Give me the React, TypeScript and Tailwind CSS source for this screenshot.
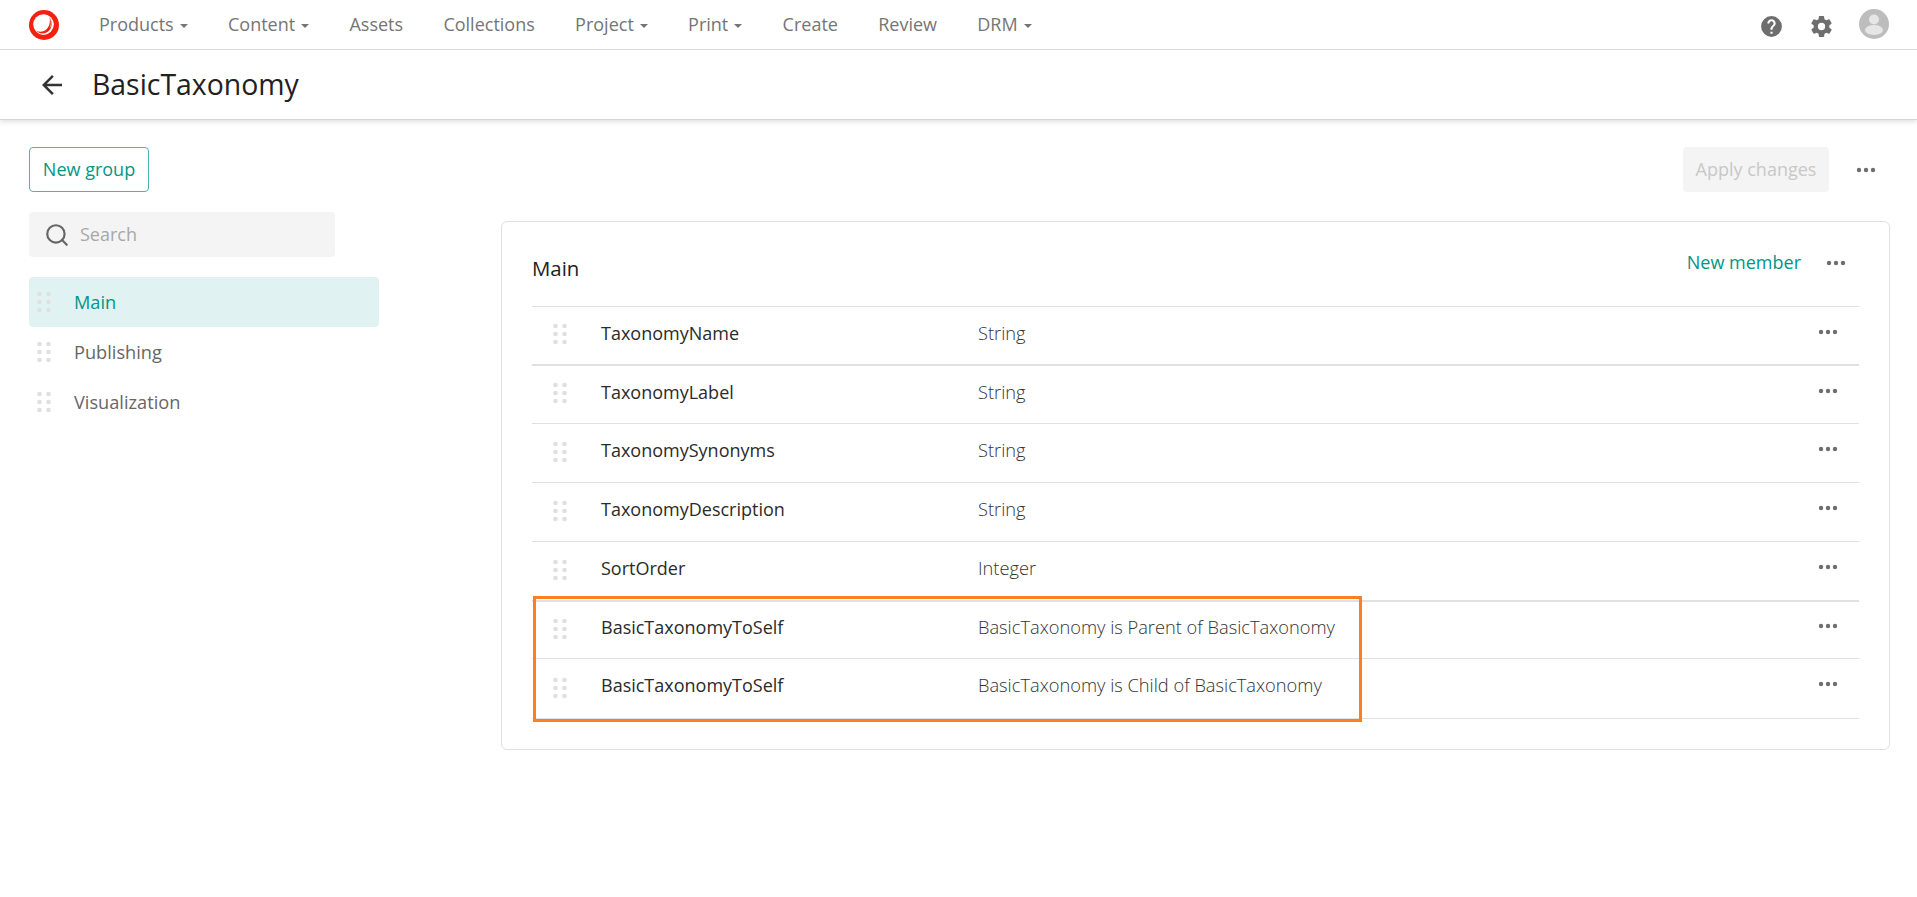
import React from "react";
import { Search } from "lucide-react";

function Caret() {
  return <span className="ml-[6px] inline-block w-0 h-0 border-x-[4.5px] border-x-transparent border-t-[4.5px] border-t-[#757575] translate-y-[1px]" />;
}

function Dots({ className = "" }: { className?: string }) {
  return (
    <svg width="20" height="6" viewBox="0 0 20 6" className={className}>
      <circle cx="3" cy="3" r="2.2" fill="#6e6e6e" />
      <circle cx="10" cy="3" r="2.2" fill="#6e6e6e" />
      <circle cx="17" cy="3" r="2.2" fill="#6e6e6e" />
    </svg>
  );
}

function Handle() {
  return (
    <svg width="14" height="22" viewBox="0 0 14 22" className="shrink-0">
      {[3, 11, 19].map((y) => (
        <g key={y}>
          <circle cx="2.5" cy={y} r="2.3" fill="#e0e0e0" />
          <circle cx="11.5" cy={y} r="2.3" fill="#e0e0e0" />
        </g>
      ))}
    </svg>
  );
}

function Logo() {
  return (
    <svg width="30" height="30" viewBox="0 0 30 30">
      <circle cx="15" cy="15" r="15" fill="#f5200f" />
      <circle cx="14.500" cy="14.500" r="10.300" fill="#fff" />
      <path d="M20.500 7C24 12 23.500 18.500 18.500 22C14.500 24.800 10 24 6.800 20.500C11 22.800 15 21.800 17.800 19C20.500 16.200 21.500 11.500 20.500 7Z" fill="#f5200f" />
      <path d="M9.500 23c4 1.800 8.500.800 11.500-2.500M12.500 24.300c3.500.500 7-.800 9.500-3.800M21.500 9c1 3 .8 6-.5 8.500" stroke="#fff" strokeWidth="0.5" fill="none" />
    </svg>
  );
}

const nav: [string, boolean][] = [
  ["Products", true],
  ["Content", true],
  ["Assets", false],
  ["Collections", false],
  ["Project", true],
  ["Print", true],
  ["Create", false],
  ["Review", false],
  ["DRM", true],
];

const groups = ["Main", "Publishing", "Visualization"];

const rows: { name: string; type: string; h: string; last?: boolean }[] = [
  { name: "TaxonomyName", type: "String", h: "h-[59px] border-b-2 pb-[5px]" },
  { name: "TaxonomyLabel", type: "String", h: "h-[58px] border-b pb-[5px]" },
  { name: "TaxonomySynonyms", type: "String", h: "h-[59px] border-b pb-[5px]" },
  { name: "TaxonomyDescription", type: "String", h: "h-[59px] border-b pb-[5px]" },
  { name: "SortOrder", type: "Integer", h: "h-[60px] border-b-2 pb-[5px]" },
  { name: "BasicTaxonomyToSelf", type: "BasicTaxonomy is Parent of BasicTaxonomy", h: "h-[57px] border-b pb-[5px]" },
  { name: "BasicTaxonomyToSelf", type: "BasicTaxonomy is Child of BasicTaxonomy", h: "h-[60px] border-b pb-[6px]", last: true },
];

export default function App() {
  return (
    <div className="min-h-[897px] bg-white font-['Open_Sans',sans-serif] text-[#333]">
      <header className="h-[50px] border-b border-[#e0e0e0] flex items-center pl-[29px] pr-[28px]">
        <Logo />
        <nav className="flex items-center gap-[40.300px] ml-[40px] text-[18px] text-[#757575]">
          {nav.map(([label, caret]) => (
            <span key={label} className="flex items-center">
              {label}
              {caret && <Caret />}
            </span>
          ))}
        </nav>
        <div className="ml-auto flex items-center">
          <svg width="25" height="25" viewBox="0 0 24 24" fill="#6e6e6e" className="translate-y-[2px]">
            <path d="M12 2a10 10 0 1 0 0 20 10 10 0 0 0 0-20Zm1 17h-2v-2h2v2Zm2.070-7.750-.9.920C13.450 12.900 13 13.500 13 15h-2v-.5c0-1.100.45-2.100 1.170-2.830l1.240-1.260c.37-.360.590-.860.590-1.410a2 2 0 0 0-4 0H8a4 4 0 0 1 8 0c0 .880-.360 1.680-.930 2.250Z" />
          </svg>
          <svg width="25" height="25" viewBox="0 0 24 24" fill="#6e6e6e" className="ml-[25px] translate-y-[2px]">
            <path d="M19.430 12.980c.04-.320.07-.640.07-.980s-.03-.660-.07-.980l2.110-1.650c.19-.150.240-.420.120-.640l-2-3.460c-.12-.220-.390-.300-.610-.220l-2.490 1c-.520-.400-1.080-.730-1.690-.980l-.380-2.650A.49.49 0 0 0 14 2h-4c-.250 0-.460.180-.490.420l-.380 2.650c-.610.250-1.170.590-1.690.980l-2.490-1c-.230-.090-.490 0-.610.220l-2 3.460c-.130.220-.070.490.120.640l2.110 1.650c-.040.320-.070.650-.070.980s.03.660.07.980l-2.110 1.650c-.190.150-.240.420-.120.640l2 3.460c.12.220.390.300.610.220l2.490-1c.520.400 1.080.730 1.690.980l.380 2.650c.03.240.240.420.490.420h4c.250 0 .460-.180.490-.420l.380-2.650c.610-.250 1.170-.590 1.690-.980l2.490 1c.230.090.490 0 .610-.220l2-3.460c.12-.220.070-.490-.120-.640l-2.110-1.650ZM12 15.500a3.500 3.500 0 1 1 0-7 3.500 3.500 0 0 1 0 7Z" />
          </svg>
          <svg width="30" height="30" viewBox="0 0 30 30" className="ml-[25px] -translate-y-[1px]">
            <circle cx="15" cy="15" r="15" fill="#bdbdbd" />
            <circle cx="15" cy="10.500" r="5" fill="#e6e6e6" />
            <ellipse cx="15" cy="21" rx="9" ry="5" fill="#e6e6e6" />
          </svg>
        </div>
      </header>

      <div className="h-[70px] border-b border-[#d6d6d6] shadow-[0_2px_5px_rgba(0,0,0,0.12)] flex items-center pl-[37px]">
        <svg width="30" height="30" viewBox="0 0 24 24" fill="#333">
          <path d="M20 11H7.830l5.590-5.590L12 4l-8 8 8 8 1.410-1.410L7.830 13H20v-2Z" />
        </svg>
        <h1 className="ml-[25px] text-[28.400px] font-normal text-[#212121]">BasicTaxonomy</h1>
      </div>

      <main className="flex pl-[29px] pr-[27px] pt-[27px]">
        <aside className="w-[350px] shrink-0">
          <button className="h-[45px] w-[120px] rounded-[4px] border border-[#4db6ac] bg-white text-[18px] font-medium text-[#009688]">New group</button>
          <div className="mt-[20px] h-[45px] w-[306px] rounded-[4px] bg-[#f4f4f4] flex items-center pl-[15px] text-[18px] text-[#a8a8a8]">
            <Search size={26} color="#666" strokeWidth={2} />
            <span className="ml-[10px]">Search</span>
          </div>
          <ul className="mt-[20px]">
            {groups.map((g, i) => (
              <li key={g} className={`h-[50px] rounded-[4px] flex items-center pl-[8px] text-[18.200px] ${i === 0 ? "bg-[#e0f2f1] text-[#009688] font-medium" : "text-[#666]"}`}>
                <Handle />
                <span className="ml-[22px] translate-x-[1px] translate-y-[1px]">{g}</span>
              </li>
            ))}
          </ul>
        </aside>

        <section className="ml-[122px] flex-1 min-w-0">
          <div className="h-[45px] flex items-center justify-end">
            <button className="h-[45px] w-[146px] rounded-[4px] bg-[#f4f4f4] text-[18px] text-[#c8c8c8]">Apply changes</button>
            <Dots className="ml-[27px] mr-[14px]" />
          </div>
          <div className="mt-[29px] h-[529px] rounded-[6px] border border-[#e0e0e0] px-[30px]">
            <div className="h-[84px] flex items-start">
              <h2 className="mt-[31px] text-[20.400px] font-normal text-[#212121]">Main</h2>
              <span className="ml-auto mt-[27px] text-[18px] font-medium text-[#009688]">New member</span>
              <Dots className="ml-[25px] mr-[13px] mt-[38px]" />
            </div>
            <div className="relative border-t border-[#e0e0e0]">
              {rows.map((r, i) => (
                <div key={i} className={`${r.h} border-[#e0e0e0] flex items-center`}>
                  <div className={`w-[69px] pl-[21px] ${r.last ? "translate-y-[2px]" : "translate-y-[1px]"}`}><Handle /></div>
                  <span className="w-[377px] shrink-0 text-[18px] leading-[25px] text-[#2b2b2b]">{r.name}</span>
                  <span className="text-[18.250px] leading-[25px] font-light text-[#333] -translate-y-[1px]">{r.type}</span>
                  <Dots className="ml-auto mr-[21px] mb-[3px]" />
                </div>
              ))}
              <div className="absolute left-[1px] top-[289px] h-[126px] w-[829px] border-[3px] border-[#fd7e23]" />
            </div>
          </div>
        </section>
      </main>
    </div>
  );
}
